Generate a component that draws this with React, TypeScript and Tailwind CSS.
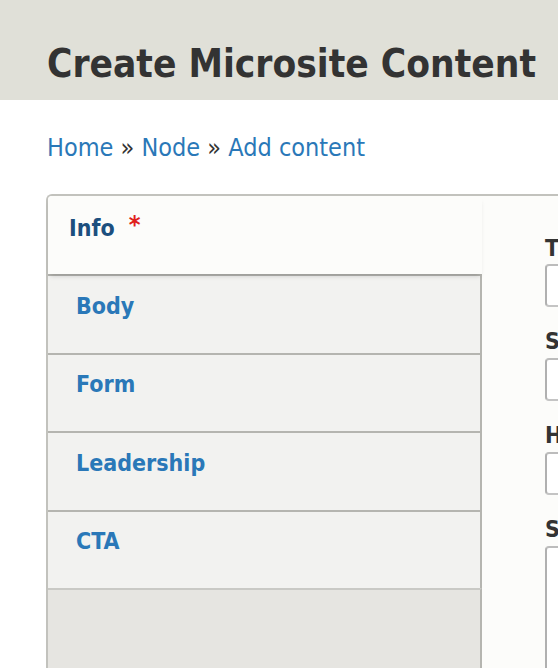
import React from "react";

const tabs = ["Body", "Form", "Leadership", "CTA"];
const fields = ["T", "S", "H"];

export default function App() {
  return (
    <div className="w-[558px] h-[668px] overflow-hidden bg-white font-['DejaVu_Sans_Condensed','DejaVu_Sans',sans-serif]">
      <div className="h-[100px] bg-[#e0e0d8] pl-[47px] pt-[45px]">
        <h1 className="text-[38.5px] leading-[38px] font-bold text-[#333] whitespace-nowrap">
          Create Microsite Content
        </h1>
      </div>
      <div className="mt-[35px] pl-[47px] text-[25px] leading-[25px] whitespace-nowrap text-[#333]">
        <span className="text-[#2a78b8]">Home</span> » <span className="text-[#2a78b8]">Node</span> »{" "}
        <span className="text-[#2a78b8]">Add content</span>
      </div>
      <div className="mt-[34px] ml-[46px] w-[620px] border-2 border-r-0 border-[#c2c2bd] rounded-tl-[6px] flex h-[500px]">
        <div className="w-[434px] flex flex-col shrink-0">
          <div className="relative z-10 h-[78px] bg-[#fcfcfa] pl-[21px] pt-[19.5px] text-[23px] leading-[23px] font-bold text-[#1c4f7e] rounded-tl-[4px] shadow-[0_4px_5px_-2px_rgba(0,0,0,0.16)]">
            Info
            <span className="relative -top-[3px] ml-[14px] text-[25px] text-[#e0201b]">*</span>
          </div>
          {tabs.map((t) => (
            <div
              key={t}
              className="box-border h-[78.5px] bg-[#f2f2f0] border-t-2 border-r-2 border-[#b5b5b0] pl-[28px] pt-[18.5px] text-[23px] leading-[23px] font-bold text-[#2a78b8]"
            >
              {t}
            </div>
          ))}
          <div className="flex-1 bg-[#e6e5e1] border-t-2 border-r-2 border-t-[#c9c9c5] border-r-[#b5b5b0]" />
        </div>
        <div className="flex-1 bg-[#fcfcfa] pl-[63px] pt-[40.5px]">
          {fields.map((f) => (
            <div key={f} className="mb-[23.4px]">
              <div className="text-[23px] leading-[23px] font-bold text-[#333] mb-[4.6px]">{f}</div>
              <div className="h-[43px] w-[300px] bg-white border-2 border-[#c4c4c4] border-l-[#b0b0b0] border-t-[#bcbcbc] rounded-[4px]" />
            </div>
          ))}
          <div>
            <div className="text-[23px] leading-[23px] font-bold text-[#333] mb-[4.6px]">S</div>
            <div className="h-[200px] w-[300px] bg-white border-2 border-[#c4c4c4] border-l-[#b0b0b0] border-t-[#bcbcbc] rounded-[4px]" />
          </div>
        </div>
      </div>
    </div>
  );
}
